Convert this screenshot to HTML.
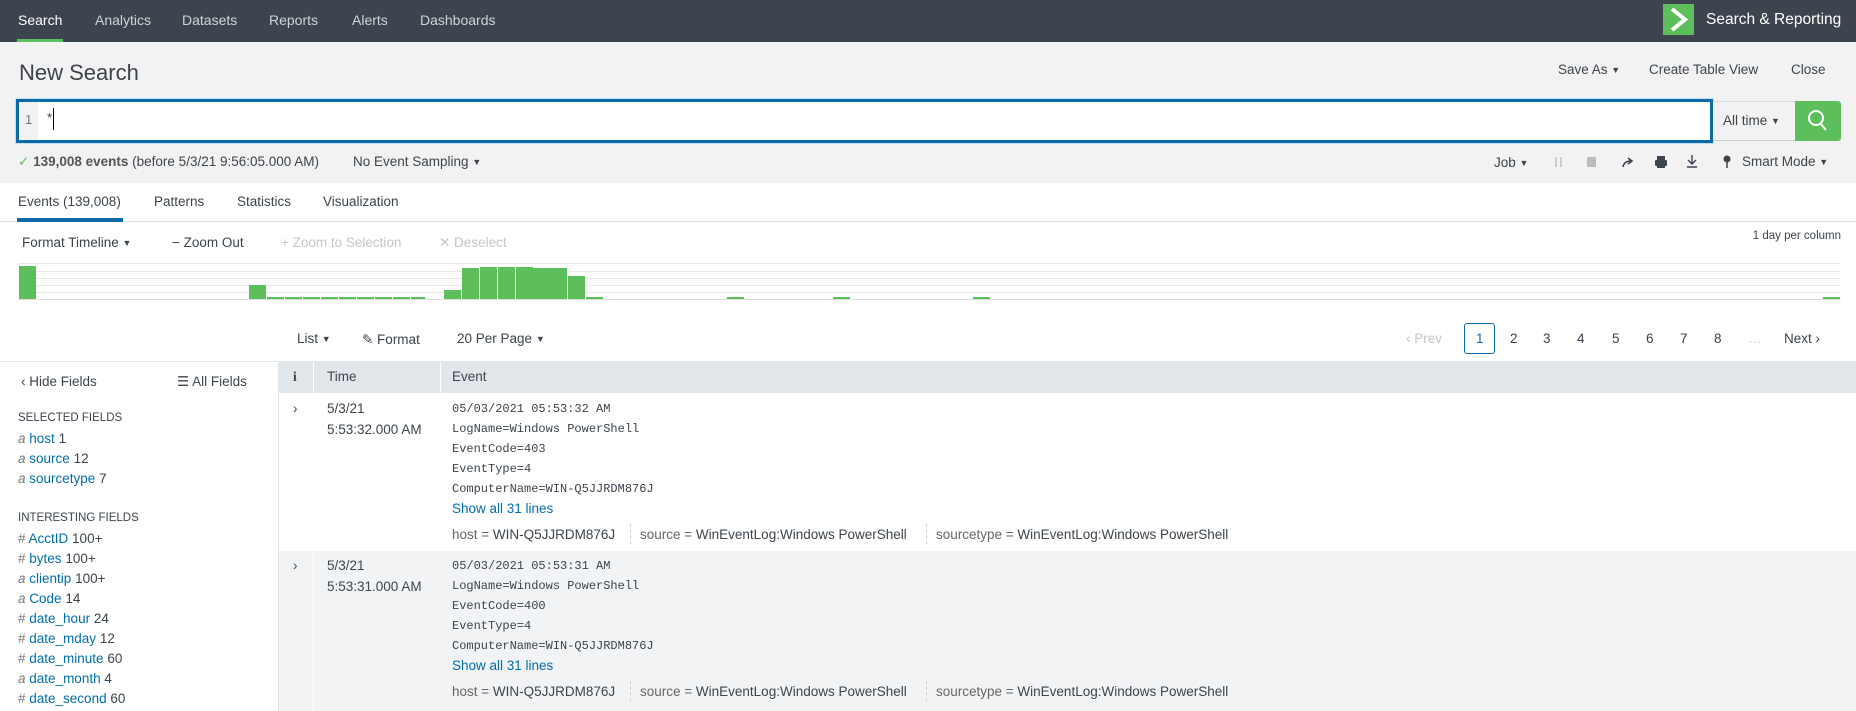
<!DOCTYPE html>
<html><head><meta charset="utf-8"><style>
*{margin:0;padding:0;box-sizing:border-box}
body{width:1856px;height:711px;overflow:hidden;background:#fff;font-family:"Liberation Sans",sans-serif;color:#3c444d;position:relative}
.a{position:absolute;white-space:nowrap}
.nav{position:absolute;left:0;top:0;width:1856px;height:42px;background:#3c444d}
.nav .a{color:#fff;font-size:14px;top:12px}
.nav .d{color:#d0d4d8}
.f{font-size:13.5px}
.lk{color:#006eaa}
.mono{font-family:"Liberation Mono",monospace;font-size:12px;color:#3c444d}
.tri{font-size:9px;vertical-align:1px}
.bar{position:absolute;background:#5cbf5c}
.gl{position:absolute;left:18px;width:1822px;height:1px;background:#e8e8e8}
</style></head><body>
<div class="nav">
<div class="a" style="left:18px">Search</div>
<div style="position:absolute;left:17px;top:39px;width:46px;height:3px;background:#5cbf5c"></div>
<div class="a d" style="left:95px">Analytics</div>
<div class="a d" style="left:182px">Datasets</div>
<div class="a d" style="left:269px">Reports</div>
<div class="a d" style="left:352px">Alerts</div>
<div class="a d" style="left:420px">Dashboards</div>
<div style="position:absolute;left:1663px;top:4px;width:31px;height:31px;background:#5cbf5c"></div>
<svg style="position:absolute;left:1663px;top:4px" width="31" height="31"><path d="M9 5 L22 15.5 L9 26" stroke="#fff" stroke-width="4" fill="none"/></svg>
<div class="a" style="left:1706px;top:11px;font-size:15.5px">Search &amp; Reporting</div>
</div>
<div style="position:absolute;left:0;top:42px;width:1856px;height:141px;background:#f2f2f2"></div>
<div class="a" style="left:19px;top:60px;font-size:22px;color:#3c444d">New Search</div>
<div class="a f" style="left:1558px;top:62px">Save As <span class="tri">▼</span></div>
<div class="a f" style="left:1649px;top:62px">Create Table View</div>
<div class="a f" style="left:1791px;top:62px">Close</div>
<div style="position:absolute;left:16px;top:99px;width:1697px;height:44px;border:3px solid #0e6aa6;background:#fff;box-shadow:0 0 0 1px #bfe0f2"></div>
<div style="position:absolute;left:19px;top:102px;width:19px;height:38px;background:#f2f2f2"></div>
<div class="a" style="left:25px;top:112px;font-size:13px;color:#777">1</div>
<div class="a" style="left:47px;top:110px;font-size:13px">*</div>
<div style="position:absolute;left:53px;top:108px;width:1px;height:22px;background:#000"></div>
<div style="position:absolute;left:1713px;top:101px;width:82px;height:40px;background:#f2f2f2;border-top:1px solid #ddd;border-bottom:1px solid #ccc"></div>
<div class="a f" style="left:1723px;top:113px">All time <span class="tri">▼</span></div>
<div style="position:absolute;left:1795px;top:101px;width:46px;height:40px;background:#5cbf5c;border-radius:0 3px 3px 0"></div>
<svg style="position:absolute;left:1805px;top:108px" width="26" height="26"><circle cx="11" cy="10" r="7" stroke="#fff" stroke-width="2" fill="none"/><path d="M15 15 L21 22" stroke="#fff" stroke-width="2"/></svg>
<div class="a f" style="left:18px;top:154px"><span style="color:#5cbf5c">✓</span> <b style="color:#555">139,008 events</b> (before 5/3/21 9:56:05.000 AM)</div>
<div class="a f" style="left:353px;top:154px">No Event Sampling <span class="tri">▼</span></div>
<div class="a f" style="left:1494px;top:155px">Job <span class="tri">▼</span></div>
<div style="position:absolute;left:1555px;top:157px;width:2px;height:10px;background:#ccc"></div>
<div style="position:absolute;left:1560px;top:157px;width:2px;height:10px;background:#ccc"></div>
<div style="position:absolute;left:1587px;top:157px;width:9px;height:10px;background:#bbb"></div>
<svg style="position:absolute;left:1621px;top:155px" width="14" height="14"><path d="M2 12 Q3 6 10 6 M7 3 L11 6 L7 9" stroke="#3c444d" stroke-width="1.6" fill="none"/></svg>
<svg style="position:absolute;left:1654px;top:155px" width="14" height="14"><rect x="3" y="1" width="8" height="4" fill="#3c444d"/><rect x="1" y="5" width="12" height="6" rx="1" fill="#3c444d"/><rect x="3" y="9" width="8" height="4" fill="#3c444d"/></svg>
<svg style="position:absolute;left:1685px;top:154px" width="14" height="15"><path d="M7 1 V10 M3 6 L7 10 L11 6 M2 13 H12" stroke="#3c444d" stroke-width="1.4" fill="none"/></svg>
<svg style="position:absolute;left:1722px;top:155px" width="10" height="14"><circle cx="5" cy="4" r="3.5" fill="#3c444d"/><path d="M5 7 V13" stroke="#3c444d" stroke-width="1.5"/></svg>
<div class="a f" style="left:1742px;top:154px">Smart Mode <span class="tri">▼</span></div>
<div class="a f" style="left:18px;top:194px">Events (139,008)</div>
<div class="a f" style="left:154px;top:194px">Patterns</div>
<div class="a f" style="left:237px;top:194px">Statistics</div>
<div class="a f" style="left:323px;top:194px">Visualization</div>
<div style="position:absolute;left:0;top:221px;width:1856px;height:1px;background:#dde0e3"></div>
<div style="position:absolute;left:17px;top:218px;width:106px;height:4px;background:#0e6aa6"></div>
<div class="a f" style="left:22px;top:235px">Format Timeline <span class="tri">▼</span></div>
<div class="a f" style="left:172px;top:235px">− Zoom Out</div>
<div class="a f" style="left:281px;top:235px;color:#c3c6c9">+ Zoom to Selection</div>
<div class="a f" style="left:439px;top:235px;color:#c3c6c9">✕ Deselect</div>
<div class="a" style="right:15px;top:230px;font-size:11.5px">1 day per column</div>
<div class="gl" style="top:263px"></div><div class="gl" style="top:271px"></div><div class="gl" style="top:278px"></div><div class="gl" style="top:285px"></div><div class="gl" style="top:292px"></div>
<div class="gl" style="top:299px;background:#ddd"></div>
<div class="bar" style="left:19px;top:266px;width:17px;height:33px"></div>
<div class="bar" style="left:249px;top:285px;width:17px;height:14px"></div>
<div class="bar" style="left:267px;top:297px;width:158px;height:2px;background:repeating-linear-gradient(90deg,#5cbf5c 0 17px,transparent 17px 18px)"></div>
<div class="bar" style="left:444px;top:290px;width:17px;height:9px"></div>
<div class="bar" style="left:462px;top:268px;width:17px;height:31px"></div>
<div class="bar" style="left:480px;top:267px;width:17px;height:32px"></div>
<div class="bar" style="left:498px;top:267px;width:17px;height:32px"></div>
<div class="bar" style="left:516px;top:267px;width:17px;height:32px"></div>
<div class="bar" style="left:533px;top:268px;width:17px;height:31px"></div>
<div class="bar" style="left:550px;top:268px;width:17px;height:31px"></div>
<div class="bar" style="left:568px;top:276px;width:17px;height:23px"></div>
<div class="bar" style="left:586px;top:297px;width:17px;height:2px"></div>
<div class="bar" style="left:727px;top:297px;width:17px;height:2px"></div>
<div class="bar" style="left:833px;top:297px;width:17px;height:2px"></div>
<div class="bar" style="left:973px;top:297px;width:17px;height:2px"></div>
<div class="bar" style="left:1823px;top:297px;width:17px;height:2px"></div>
<div class="a f" style="left:297px;top:331px">List <span class="tri">▼</span></div>
<div class="a f" style="left:362px;top:332px">✎ Format</div>
<div class="a f" style="left:457px;top:331px">20 Per Page <span class="tri">▼</span></div>
<div class="a f" style="left:1406px;top:331px;color:#c3c6c9">‹ Prev</div>
<div style="position:absolute;left:1464px;top:323px;width:31px;height:31px;border:1px solid #0e6aa6;border-radius:3px"></div>
<div class="a f" style="left:1476px;top:331px;color:#0e6aa6">1</div>
<div class="a f" style="left:1510px;top:331px">2</div>
<div class="a f" style="left:1543px;top:331px">3</div>
<div class="a f" style="left:1577px;top:331px">4</div>
<div class="a f" style="left:1612px;top:331px">5</div>
<div class="a f" style="left:1646px;top:331px">6</div>
<div class="a f" style="left:1680px;top:331px">7</div>
<div class="a f" style="left:1714px;top:331px">8</div>
<div class="a f" style="left:1748px;top:331px;color:#ccc">…</div>
<div class="a f" style="left:1784px;top:331px">Next ›</div>
<div style="position:absolute;left:0;top:361px;width:1856px;height:1px;background:#e4e4e4"></div>
<div style="position:absolute;left:278px;top:361px;width:1px;height:350px;background:#e4e4e4"></div>
<div class="a f" style="left:21px;top:374px">‹ Hide Fields</div>
<div class="a f" style="left:177px;top:374px">☰ All Fields</div>
<div class="a" style="left:18px;top:412px;font-size:11.5px">SELECTED FIELDS</div>
<div class="a f" style="left:18px;top:431px"><i style="color:#777">a</i> <span class="lk">host</span> 1</div>
<div class="a f" style="left:18px;top:451px"><i style="color:#777">a</i> <span class="lk">source</span> 12</div>
<div class="a f" style="left:18px;top:471px"><i style="color:#777">a</i> <span class="lk">sourcetype</span> 7</div>
<div class="a" style="left:18px;top:512px;font-size:11.5px">INTERESTING FIELDS</div>
<div class="a f" style="left:18px;top:531px;color:#777"># <span class="lk">AcctID</span> <span style="color:#3c444d">100+</span></div>
<div class="a f" style="left:18px;top:551px;color:#777"># <span class="lk">bytes</span> <span style="color:#3c444d">100+</span></div>
<div class="a f" style="left:18px;top:571px;color:#777"><i>a</i> <span class="lk">clientip</span> <span style="color:#3c444d">100+</span></div>
<div class="a f" style="left:18px;top:591px;color:#777"><i>a</i> <span class="lk">Code</span> <span style="color:#3c444d">14</span></div>
<div class="a f" style="left:18px;top:611px;color:#777"># <span class="lk">date_hour</span> <span style="color:#3c444d">24</span></div>
<div class="a f" style="left:18px;top:631px;color:#777"># <span class="lk">date_mday</span> <span style="color:#3c444d">12</span></div>
<div class="a f" style="left:18px;top:651px;color:#777"># <span class="lk">date_minute</span> <span style="color:#3c444d">60</span></div>
<div class="a f" style="left:18px;top:671px;color:#777"><i>a</i> <span class="lk">date_month</span> <span style="color:#3c444d">4</span></div>
<div class="a f" style="left:18px;top:691px;color:#777"># <span class="lk">date_second</span> <span style="color:#3c444d">60</span></div>
<div style="position:absolute;left:279px;top:362px;width:1577px;height:31px;background:#e1e6eb"></div>
<div style="position:absolute;left:313px;top:362px;width:1px;height:31px;background:#fff"></div>
<div style="position:absolute;left:440px;top:362px;width:1px;height:31px;background:#fff"></div>
<div class="a f" style="left:293px;top:369px;font-weight:bold;font-family:'Liberation Serif',serif">i</div>
<div class="a f" style="left:327px;top:369px">Time</div>
<div class="a f" style="left:452px;top:369px">Event</div>
<div style="position:absolute;left:279px;top:551px;width:1577px;height:160px;background:#f2f3f5"></div>
<div style="position:absolute;left:313px;top:551px;width:1px;height:160px;background:#fff"></div>
<!-- row1 -->
<div class="a f" style="left:293px;top:401px">›</div>
<div class="a f" style="left:327px;top:401px">5/3/21</div>
<div class="a f" style="left:327px;top:422px">5:53:32.000 AM</div>
<div class="a mono" style="left:452px;top:402px">05/03/2021 05:53:32 AM</div>
<div class="a mono" style="left:452px;top:422px">LogName=Windows PowerShell</div>
<div class="a mono" style="left:452px;top:442px">EventCode=403</div>
<div class="a mono" style="left:452px;top:462px">EventType=4</div>
<div class="a mono" style="left:452px;top:482px">ComputerName=WIN-Q5JJRDM876J</div>
<div class="a f lk" style="left:452px;top:501px">Show all 31 lines</div>
<div class="a f" style="left:452px;top:527px"><span style="color:#666">host =</span> WIN-Q5JJRDM876J</div>
<div style="position:absolute;left:630px;top:524px;height:20px;border-left:1px dashed #ccc"></div>
<div class="a f" style="left:640px;top:527px"><span style="color:#666">source =</span> WinEventLog:Windows PowerShell</div>
<div style="position:absolute;left:926px;top:524px;height:20px;border-left:1px dashed #ccc"></div>
<div class="a f" style="left:936px;top:527px"><span style="color:#666">sourcetype =</span> WinEventLog:Windows PowerShell</div>
<!-- row2 -->
<div class="a f" style="left:293px;top:558px">›</div>
<div class="a f" style="left:327px;top:558px">5/3/21</div>
<div class="a f" style="left:327px;top:579px">5:53:31.000 AM</div>
<div class="a mono" style="left:452px;top:559px">05/03/2021 05:53:31 AM</div>
<div class="a mono" style="left:452px;top:579px">LogName=Windows PowerShell</div>
<div class="a mono" style="left:452px;top:599px">EventCode=400</div>
<div class="a mono" style="left:452px;top:619px">EventType=4</div>
<div class="a mono" style="left:452px;top:639px">ComputerName=WIN-Q5JJRDM876J</div>
<div class="a f lk" style="left:452px;top:658px">Show all 31 lines</div>
<div class="a f" style="left:452px;top:684px"><span style="color:#666">host =</span> WIN-Q5JJRDM876J</div>
<div style="position:absolute;left:630px;top:681px;height:20px;border-left:1px dashed #ccc"></div>
<div class="a f" style="left:640px;top:684px"><span style="color:#666">source =</span> WinEventLog:Windows PowerShell</div>
<div style="position:absolute;left:926px;top:681px;height:20px;border-left:1px dashed #ccc"></div>
<div class="a f" style="left:936px;top:684px"><span style="color:#666">sourcetype =</span> WinEventLog:Windows PowerShell</div>
</body></html>
